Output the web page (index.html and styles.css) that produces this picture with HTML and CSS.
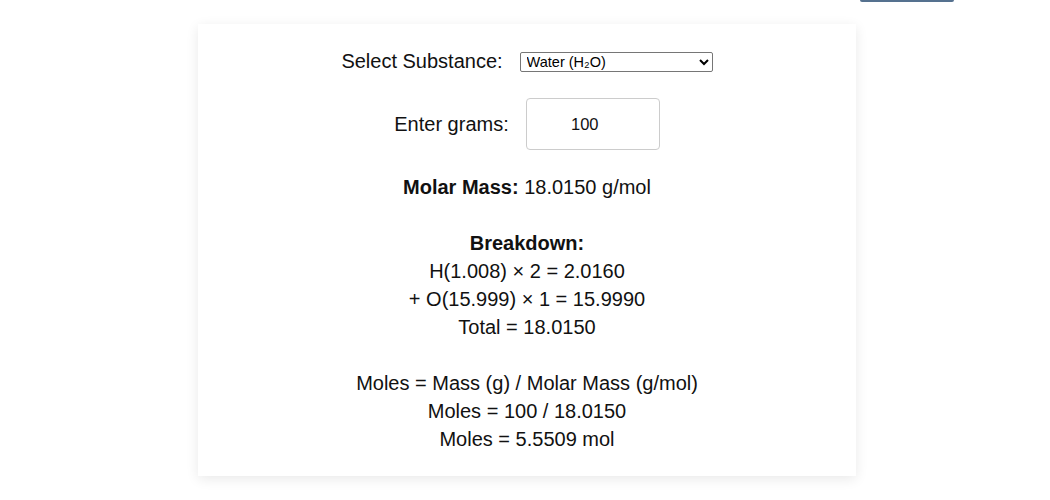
FILE: index.html
```html
<!DOCTYPE html>
<html lang="en">
<head>
<meta charset="utf-8">
<title>Molar Mass Calculator</title>
<link rel="stylesheet" href="styles.css">
</head>
<body>
<div class="top-button"></div>
<main class="page">
  <section class="card">
    <div class="row row-select">
      <label class="label" for="substance">Select Substance:</label>
      <select id="substance" class="select">
        <option>Water (H₂O)</option>
        <option>Carbon Dioxide (CO₂)</option>
        <option>Sodium Chloride (NaCl)</option>
      </select>
    </div>
    <div class="row row-input">
      <label class="label" for="grams">Enter grams:</label>
      <input id="grams" class="input" type="text" value="100">
    </div>
    <div class="result">
      <div><b>Molar Mass:</b> 18.0150 g/mol</div>
      <div class="blank"></div>
      <div><b>Breakdown:</b></div>
      <div>H(1.008) × 2 = 2.0160</div>
      <div>+ O(15.999) × 1 = 15.9990</div>
      <div>Total = 18.0150</div>
      <div class="blank"></div>
      <div>Moles = Mass (g) / Molar Mass (g/mol)</div>
      <div>Moles = 100 / 18.0150</div>
      <div>Moles = 5.5509 mol</div>
    </div>
  </section>
</main>
</body>
</html>
```

FILE: styles.css
```css
html, body {
  margin: 0;
  padding: 0;
  background: #ffffff;
}

body {
  font-family: "Liberation Sans", Arial, sans-serif;
  color: #111111;
  position: relative;
  width: 1050px;
  height: 500px;
  overflow: hidden;
}

.top-button {
  position: absolute;
  top: 0;
  left: 860px;
  width: 94px;
  height: 2px;
  background: #55718f;
  border-radius: 0 0 4px 4px;
}

.page {
  display: flex;
  justify-content: center;
  padding-top: 24px;
  padding-left: 4px;
}

.card {
  width: 658px;
  box-sizing: border-box;
  background: #ffffff;
  padding: 23px 20px 23px;
  box-shadow: 0 3px 12px rgba(0, 0, 0, 0.09);
  display: flex;
  flex-direction: column;
  align-items: center;
}

.row {
  display: flex;
  align-items: center;
  justify-content: center;
  gap: 17px;
}

.row-select {
  height: 28px;
  margin-bottom: 23px;
}

.row-input {
  height: 52px;
  margin-bottom: 23px;
}

.label {
  font-size: 20px;
  line-height: 28px;
}

.select {
  width: 193px;
  height: 20px;
  margin-top: 2px;
  font-family: "Liberation Sans", Arial, sans-serif;
  font-size: 14.5px;
  color: #000;
  border: 1px solid #767676;
  border-radius: 2px;
  background: #fff;
  padding: 0 2px;
  box-sizing: border-box;
}

.input {
  width: 134px;
  height: 52px;
  box-sizing: border-box;
  border: 1px solid #cccccc;
  border-radius: 4px;
  font-family: "Liberation Sans", Arial, sans-serif;
  font-size: 16.5px;
  text-align: center;
  color: #111;
  padding: 0 16px 0 0;
  outline: none;
}

.result {
  font-size: 20px;
  line-height: 28px;
  text-align: center;
}

.result b {
  font-weight: bold;
}

.blank {
  height: 28px;
}
```
